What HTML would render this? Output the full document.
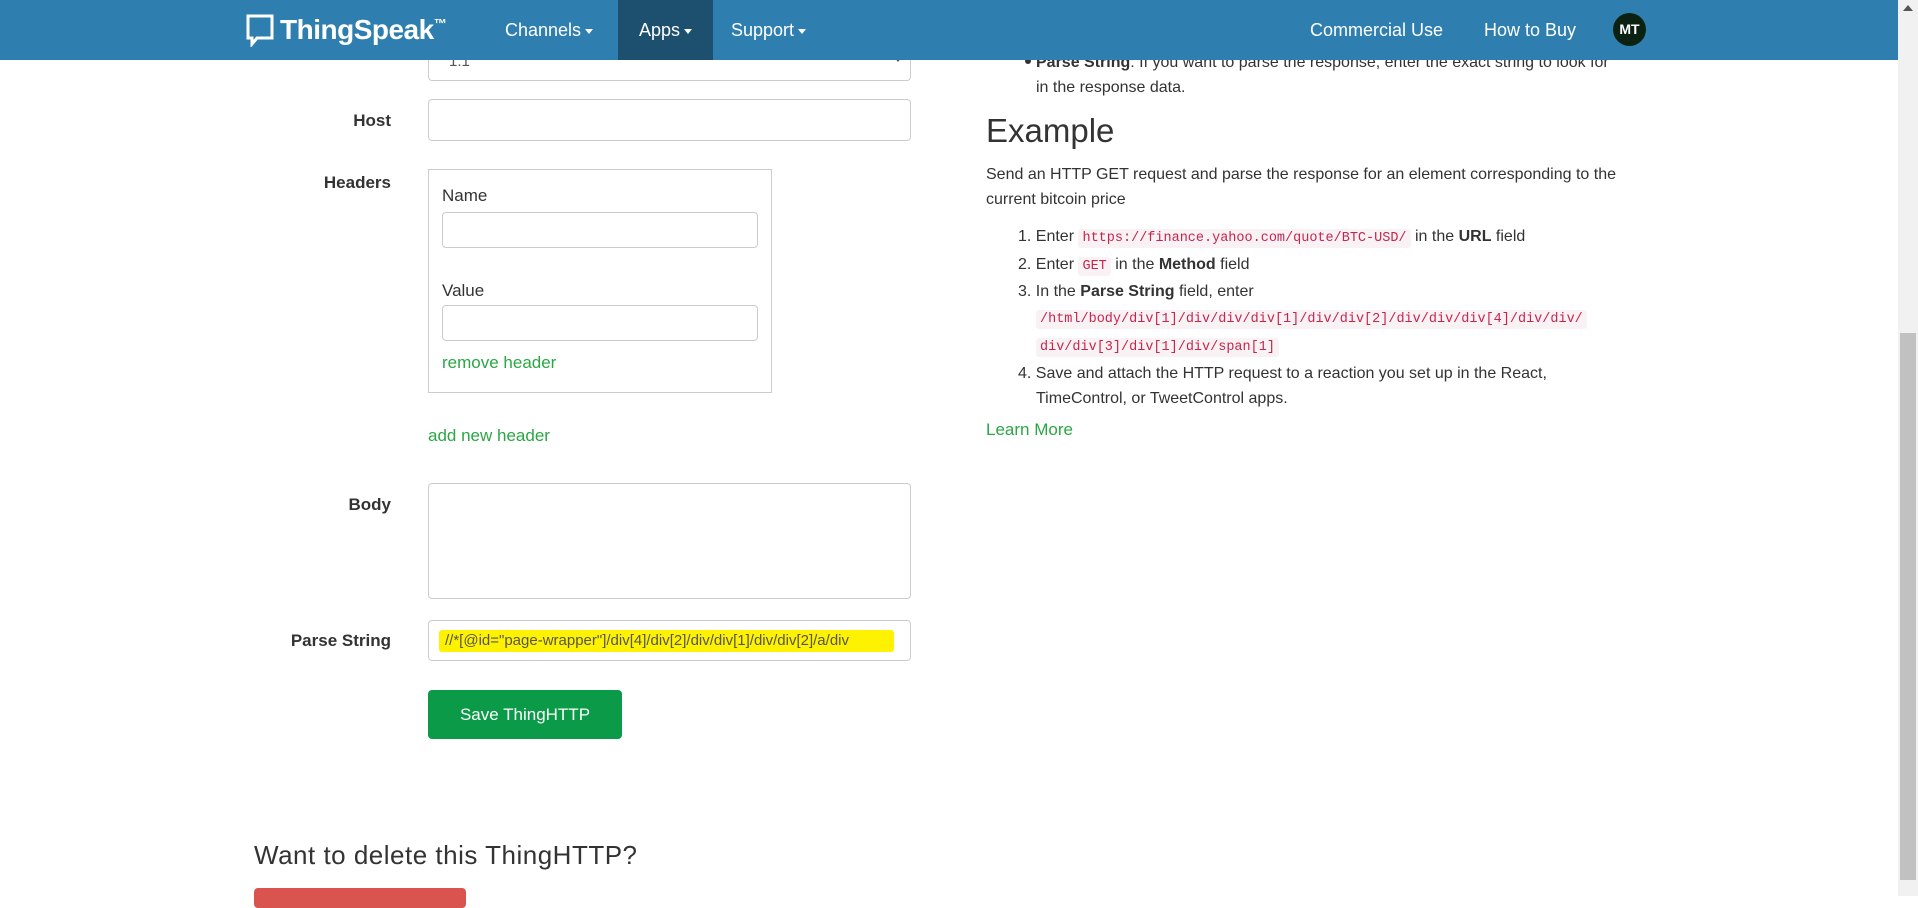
<!DOCTYPE html>
<html><head><meta charset="utf-8"><style>
*{box-sizing:border-box;margin:0;padding:0}
body{width:1918px;height:896px;overflow:hidden;background:#fff;font-family:"Liberation Sans",sans-serif;color:#333;position:relative;font-size:15.5px}
.nav{position:absolute;left:0;top:0;width:1898px;height:60px;background:#2e7eb0;color:#fff;z-index:10}
.nav .it{position:absolute;top:0;height:60px;line-height:60px;font-size:18px}
.caret{display:inline-block;width:0;height:0;border-left:4px solid transparent;border-right:4px solid transparent;border-top:5px solid #fff;vertical-align:middle;margin-left:4px}
.abs{position:absolute}
.lbl{position:absolute;right:1527px;font-weight:bold;font-size:17px;color:#333}
.inp{position:absolute;border:1px solid #ccc;border-radius:4px;background:#fff}
.green{color:#2aa745}
code{font-family:"Liberation Mono",monospace;font-size:13.5px;color:#c7254e;background:#f9f2f4;padding:2px 4px;border-radius:3px}
.sb{position:absolute;right:0;top:0;width:20px;height:896px;background:#f1f1f1}
</style></head><body>
<div class="nav">
 <div class="abs" style="left:245px;top:13px;width:30px;height:34px">
  <svg width="30" height="34" viewBox="0 0 30 34"><path d="M3 3H27V25H12L7 31V25H3Z" fill="none" stroke="#fff" stroke-width="3"/></svg>
 </div>
 <div class="it" style="left:280px;font-size:28px;font-weight:bold;letter-spacing:-0.5px">ThingSpeak<sup style="font-size:13px;vertical-align:top;position:relative;top:-6px">™</sup></div>
 <div class="it" style="left:505px">Channels<span class="caret"></span></div>
 <div class="it" style="left:618px;width:95px;background:#1d4f6e;text-align:center">Apps<span class="caret"></span></div>
 <div class="it" style="left:731px">Support<span class="caret"></span></div>
 <div class="it" style="left:1310px">Commercial Use</div>
 <div class="it" style="left:1484px">How to Buy</div>
 <div class="abs" style="left:1613px;top:13px;width:33px;height:33px;border-radius:50%;background:#0b2212;color:#fff;font-weight:bold;font-size:14px;line-height:33px;text-align:center">MT</div>
</div>
<div class="sb"><div class="abs" style="left:2px;top:333px;width:16px;height:547px;background:#c1c1c1"></div><div class="abs" style="left:5px;top:5px;border-left:5px solid transparent;border-right:5px solid transparent;border-bottom:6px solid #555"></div></div>

<div class="inp" style="left:428px;top:30px;width:483px;height:51px">
 <div class="abs" style="left:20px;top:22px;font-size:15px;color:#555">1.1</div>
 <div class="abs" style="right:8px;top:26px;border-left:4px solid transparent;border-right:4px solid transparent;border-top:5px solid #555"></div>
</div>
<div class="lbl" style="top:111px">Host</div>
<div class="inp" style="left:428px;top:99px;width:483px;height:42px"></div>
<div class="lbl" style="top:173px">Headers</div>
<div class="abs" style="left:428px;top:169px;width:344px;height:224px;border:1px solid #ccc"></div>
<div class="abs" style="left:442px;top:186px;font-size:17px">Name</div>
<div class="inp" style="left:442px;top:212px;width:316px;height:36px"></div>
<div class="abs" style="left:442px;top:281px;font-size:17px">Value</div>
<div class="inp" style="left:442px;top:305px;width:316px;height:36px"></div>
<div class="abs green" style="left:442px;top:353px;font-size:17px">remove header</div>
<div class="abs green" style="left:428px;top:426px;font-size:17px">add new header</div>
<div class="lbl" style="top:495px">Body</div>
<div class="inp" style="left:428px;top:483px;width:483px;height:116px"></div>
<div class="lbl" style="top:631px">Parse String</div>
<div class="inp" style="left:428px;top:620px;width:483px;height:41px;overflow:hidden">
 <div class="abs" style="left:10px;top:9px;width:455px;height:22px;background:#fff200;border-radius:3px"></div>
 <div class="abs" style="left:16px;top:11px;white-space:nowrap;font-size:15px;color:#555;width:446px;overflow:hidden">//*[@id="page-wrapper"]/div[4]/div[2]/div/div[1]/div/div[2]/a/div</div>
</div>
<div class="abs" style="left:428px;top:690px;width:194px;height:49px;background:#0b9b48;border-radius:4px;color:#fff;font-size:17px;line-height:49px;text-align:center">Save ThingHTTP</div>
<div class="abs" style="left:254px;top:840px;font-size:26px;color:#333;letter-spacing:0.5px">Want to delete this ThingHTTP?</div>
<div class="abs" style="left:254px;top:888px;width:212px;height:20px;background:#d9534f;border-radius:4px"></div>

<div class="abs" style="left:1025px;top:58px;width:6px;height:6px;border-radius:50%;background:#333"></div>
<div class="abs" style="left:1036px;top:50px;line-height:25px;width:640px;font-size:16px"><b>Parse String</b>: If you want to parse the response, enter the exact string to look for<br>in the response data.</div>
<div class="abs" style="left:986px;top:112px;font-size:33px;color:#333">Example</div>
<div class="abs" style="left:986px;top:162px;line-height:25px;width:700px;font-size:16px">Send an HTTP GET request and parse the response for an element corresponding to the<br>current bitcoin price</div>
<div class="abs" style="left:1018px;top:224px;line-height:25.7px;width:660px;white-space:nowrap;font-size:16px">
1. Enter <code>https://finance.yahoo.com/quote/BTC-USD/</code> in the <b>URL</b> field<br>
2. Enter <code>GET</code> in the <b>Method</b> field<br>
3. In the <b>Parse String</b> field, enter<br>
<span style="margin-left:18px"><code>/html/body/div[1]/div/div/div[1]/div/div[2]/div/div/div[4]/div/div/</code></span><br>
<span style="margin-left:18px"><code>div/div[3]/div[1]/div/span[1]</code></span><br>
4. Save and attach the HTTP request to a reaction you set up in the React,<br>
<span style="margin-left:18px">TimeControl, or TweetControl apps.</span>
</div>
<div class="abs green" style="left:986px;top:420px;font-size:17px">Learn More</div>
</body></html>
